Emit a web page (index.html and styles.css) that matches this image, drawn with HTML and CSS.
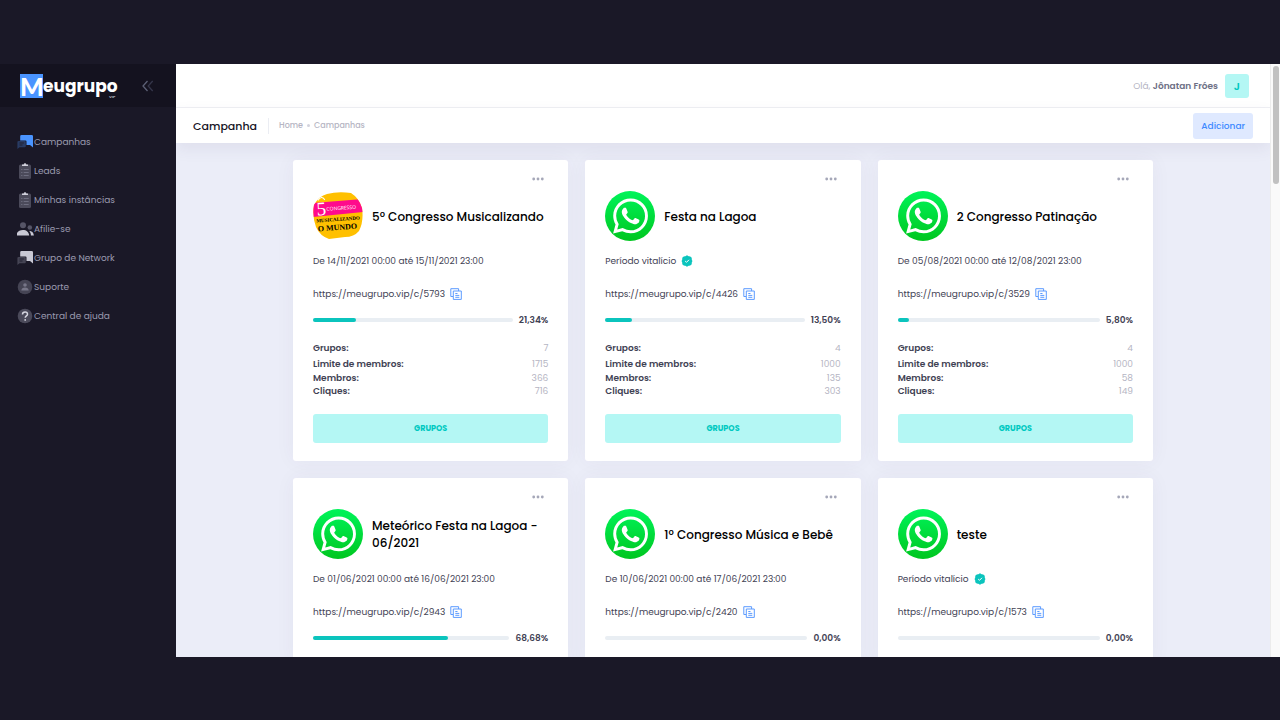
FILE: index.html
```html
<!DOCTYPE html>
<html lang="pt-BR">
<head>
    <meta charset="UTF-8">
    <meta name="viewport" content="width=device-width, initial-scale=1.0">
    <title>Meugrupo - Campanhas</title>
    <link rel="stylesheet" href="styles.css">
</head>
<body>
    <!-- icons -->
    <svg class="sprite" aria-hidden="true">
        <linearGradient id="green" x1="0" y1="0" x2="0" y2="1">
            <stop offset="0" stop-color="#00f45a"/>
            <stop offset="1" stop-color="#00c61f"/>
        </linearGradient>
        <symbol id="whatsapp" viewBox="0 0 50 50">
            <circle cx="25" cy="25" r="25" fill="url(#green)"/>
            <path transform="translate(8 7.500) scale(1.460)" fill="#fff" d="M17.472 14.382c-.297-.149-1.758-.867-2.03-.967-.273-.099-.471-.148-.67.15-.197.297-.767.966-.94 1.164-.173.199-.347.223-.644.075-.297-.15-1.255-.463-2.39-1.475-.883-.788-1.48-1.761-1.653-2.059-.173-.297-.018-.458.13-.606.134-.133.298-.347.446-.52.149-.174.198-.298.298-.497.099-.198.05-.371-.025-.52-.075-.149-.669-1.612-.916-2.207-.242-.579-.487-.5-.669-.51-.173-.008-.371-.01-.57-.01-.198 0-.52.074-.792.372-.272.297-1.04 1.016-1.04 2.479 0 1.462 1.065 2.875 1.213 3.074.149.198 2.096 3.2 5.077 4.487.709.306 1.262.489 1.694.625.712.227 1.36.195 1.871.118.571-.085 1.758-.719 2.006-1.413.248-.694.248-1.289.173-1.413-.074-.124-.272-.198-.57-.347m-5.421 7.403h-.004a9.87 9.87 0 01-5.031-1.378l-.361-.214-3.741.982.998-3.648-.235-.374a9.86 9.86 0 01-1.51-5.26c.001-5.45 4.436-9.884 9.888-9.884 2.64 0 5.122 1.03 6.988 2.898a9.825 9.825 0 012.893 6.994c-.003 5.45-4.437 9.884-9.885 9.884m8.413-18.297A11.815 11.815 0 0012.05 0C5.495 0 .16 5.335.157 11.892c0 2.096.547 4.142 1.588 5.945L.057 24l6.305-1.654a11.882 11.882 0 005.683 1.448h.005c6.554 0 11.89-5.335 11.893-11.893a11.821 11.821 0 00-3.48-8.413z"/>
        </symbol>
        <symbol id="dots" viewBox="0 0 12 4">
            <circle cx="1.700" cy="2" r="1.400"/><circle cx="6" cy="2" r="1.400"/><circle cx="10.300" cy="2" r="1.400"/>
        </symbol>
        <symbol id="copy" viewBox="0 0 12 12">
            <path d="M3 8.500H.8V.7h7.800V3M3.300 3h8v8.400h-8zM5.300 5.500h2.200M5.300 7.400h4M5.300 9.300h4" fill="none" stroke="#5c9bff" stroke-width="1"/>
        </symbol>
        <symbol id="verified" viewBox="0 0 12 12">
            <path d="M6 .1Q7 1.500 8.300 1.300 10.900 1.500 10.800 3.400 10.500 5 11.500 6 10.500 7 10.800 8.600 10.900 10.500 8.300 10.700 7 10.500 6 11.900 5 10.500 3.700 10.700 1.100 10.500 1.200 8.600 1.500 7 .5 6 1.500 5 1.200 3.400 1.100 1.500 3.700 1.300 5 1.500 6 .1z" fill="#0bc4bd"/>
            <path d="M4.200 6.100l1.300 1.200L8 4.800" fill="none" stroke="#fff" stroke-width="1"/>
        </symbol>
        <symbol id="chat" viewBox="0 0 17 16">
            <path fill="var(--bubble)" d="M4.500 1h10.200q1.300 0 1.300 1.300V13.500l-3-2.500H9.500V7.500q0-1-1-1H3.200V2.300Q3.200 1 4.500 1z"/>
            <path fill="var(--small)" d="M1.500 7h6.300q1 0 1 1v4.300q0 1-1 1H2.500L.4 15V8q0-1 1.100-1z"/>
            <path stroke="#222030" d="M2.500 9h4.300M2.500 11h3" fill="none"/>
        </symbol>
        <symbol id="clipboard" viewBox="0 0 17 16">
            <rect x="2" y="1.500" width="12" height="14.500" rx="1.500" fill="#4b4a5a"/>
            <path d="M5 3V1.500h1.700a1.300 1.300 0 012.600 0H11V3z" fill="#cfcfda"/>
            <path d="M4.200 6.500h1.200M6.700 6.500h5M4.200 9.500h1.200M6.700 9.500h5M4.200 12.500h1.200M6.700 12.500h5" stroke="#77778a" stroke-width=".8"/>
        </symbol>
        <symbol id="users" viewBox="0 0 17 16">
            <circle cx="6" cy="4.300" r="3" fill="#565567"/>
            <circle cx="12.800" cy="6.500" r="2.300" fill="#565567"/>
            <path d="M-.7 14.500C-.4 11 2.400 9 5.900 9s6 2 6.300 5.500zM12 9.800c2.900.2 4.500 1.800 4.900 4.700h-3c0-1.900-.5-3.400-1.900-4.700z" fill="#c9c9d5"/>
        </symbol>
        <symbol id="support" viewBox="0 0 17 16">
            <circle cx="8" cy="8" r="7.300" fill="#454454"/>
            <circle cx="8" cy="6" r="1.800" fill="#777688"/>
            <path d="M4.300 11.500q.3-3 3.700-3t3.700 3z" fill="#777688"/>
        </symbol>
        <symbol id="help" viewBox="0 0 17 16">
            <circle cx="8" cy="8" r="7.300" fill="#4b4a5a"/>
            <path d="M5.500 6.400C5.500 4.800 6.500 4 8.100 4s2.400 1 2.400 2.200c0 1.600-2.300 1.700-2.300 3.500" fill="none" stroke="#d5d5df" stroke-width="1.500"/>
            <circle cx="8.200" cy="11.900" r=".9" fill="#d5d5df"/>
        </symbol>
    </svg>

    <div class="app">
        <aside class="sidebar">
            <div class="brand">
                <a class="logo" href="#"><span class="logo-m">M</span><span class="logo-text">eugrupo<small class="logo-vip">VIP</small></span></a>
                <button class="collapse" type="button" aria-label="Recolher menu">
                    <svg width="12" height="12" viewBox="0 0 12 12" fill="none" stroke-width="1.300"><path d="M5.500 1L1 6l4.500 5" stroke="#5d6176"/><path d="M10.700 1L6.200 6l4.500 5" stroke="#35364a"/></svg>
                </button>
            </div>
            <nav class="menu">
                <a class="active" href="#"><svg class="menu-icon"><use href="#chat"/></svg>Campanhas</a>
                <a href="#"><svg class="menu-icon"><use href="#clipboard"/></svg>Leads</a>
                <a href="#"><svg class="menu-icon"><use href="#clipboard"/></svg>Minhas instâncias</a>
                <a href="#"><svg class="menu-icon"><use href="#users"/></svg>Afilie-se</a>
                <a href="#"><svg class="menu-icon"><use href="#chat"/></svg>Grupo de Network</a>
                <a href="#"><svg class="menu-icon"><use href="#support"/></svg>Suporte</a>
                <a href="#"><svg class="menu-icon"><use href="#help"/></svg>Central de ajuda</a>
            </nav>
        </aside>

        <div class="main">
            <header class="topbar">
                <span class="hello">Olá, <b>Jônatan Fróes</b></span>
                <span class="initial">J</span>
            </header>
            <div class="subheader">
                <h1>Campanha</h1>
                <div class="breadcrumb">
                    <a href="#">Home</a>
                    <i></i>
                    <a href="#">Campanhas</a>
                </div>
                <button class="add" type="button">Adicionar</button>
            </div>

            <main class="content">
                <div class="cards">
                    <section class="card">
                        <button class="more" type="button" aria-label="Opções"><svg><use href="#dots"/></svg></button>
                        <div class="card-head">
                            <svg class="avatar" viewBox="0 0 50 50">
                                <clipPath id="shape"><path d="M14 3Q25 0 38 2Q46 7 49 17Q51 30 46 40Q41 46 32 46L16 48Q7 45 3 36Q-1 25 1 14Q6 5 14 3z"/></clipPath>
                                <g clip-path="url(#shape)">
                                    <rect width="50" height="50" fill="#ffc000"/>
                                    <path d="M0 12L50 8V21L0 26z" fill="#ff0a8c"/>
                                    <g transform="rotate(-4 25 25)">
                                        <path d="M6 8q4-5 7 0" fill="none" stroke="#fff" stroke-width="1"/>
                                        <text class="art-number" x="4" y="23">5</text>
                                        <text class="art-small" x="14" y="19">CONGRESSO</text>
                                        <text class="art-mid" x="3" y="30">MUSICALIZANDO</text>
                                        <text class="art-big" x="4" y="39">O MUNDO</text>
                                    </g>
                                </g>
                            </svg>
                            <h2>5º Congresso Musicalizando</h2>
                        </div>
                        <p class="period">De 14/11/2021 00:00 até 15/11/2021 23:00</p>
                        <p class="link">https://meugrupo.vip/c/5793 <button type="button" aria-label="Copiar"><svg><use href="#copy"/></svg></button></p>
                        <div class="progress"><div class="track"><div class="bar" style="width: 21.34%"></div></div><b>21,34%</b></div>
                        <dl class="stats">
                            <div><dt>Grupos:</dt><dd>7</dd></div>
                            <div><dt>Limite de membros:</dt><dd>1715</dd></div>
                            <div class="tight"><dt>Membros:</dt><dd>366</dd></div>
                            <div class="tight"><dt>Cliques:</dt><dd>716</dd></div>
                        </dl>
                        <button class="groups" type="button">GRUPOS</button>
                    </section>

                    <section class="card">
                        <button class="more" type="button" aria-label="Opções"><svg><use href="#dots"/></svg></button>
                        <div class="card-head">
                            <svg class="avatar"><use href="#whatsapp"/></svg>
                            <h2>Festa na Lagoa</h2>
                        </div>
                        <p class="period">Período vitalício <svg><use href="#verified"/></svg></p>
                        <p class="link">https://meugrupo.vip/c/4426 <button type="button" aria-label="Copiar"><svg><use href="#copy"/></svg></button></p>
                        <div class="progress"><div class="track"><div class="bar" style="width: 13.5%"></div></div><b>13,50%</b></div>
                        <dl class="stats">
                            <div><dt>Grupos:</dt><dd>4</dd></div>
                            <div><dt>Limite de membros:</dt><dd>1000</dd></div>
                            <div class="tight"><dt>Membros:</dt><dd>135</dd></div>
                            <div class="tight"><dt>Cliques:</dt><dd>303</dd></div>
                        </dl>
                        <button class="groups" type="button">GRUPOS</button>
                    </section>

                    <section class="card">
                        <button class="more" type="button" aria-label="Opções"><svg><use href="#dots"/></svg></button>
                        <div class="card-head">
                            <svg class="avatar"><use href="#whatsapp"/></svg>
                            <h2>2 Congresso Patinação</h2>
                        </div>
                        <p class="period">De 05/08/2021 00:00 até 12/08/2021 23:00</p>
                        <p class="link">https://meugrupo.vip/c/3529 <button type="button" aria-label="Copiar"><svg><use href="#copy"/></svg></button></p>
                        <div class="progress"><div class="track"><div class="bar" style="width: 5.8%"></div></div><b>5,80%</b></div>
                        <dl class="stats">
                            <div><dt>Grupos:</dt><dd>4</dd></div>
                            <div><dt>Limite de membros:</dt><dd>1000</dd></div>
                            <div class="tight"><dt>Membros:</dt><dd>58</dd></div>
                            <div class="tight"><dt>Cliques:</dt><dd>149</dd></div>
                        </dl>
                        <button class="groups" type="button">GRUPOS</button>
                    </section>

                    <section class="card">
                        <button class="more" type="button" aria-label="Opções"><svg><use href="#dots"/></svg></button>
                        <div class="card-head">
                            <svg class="avatar"><use href="#whatsapp"/></svg>
                            <h2>Meteórico Festa na Lagoa - 06/2021</h2>
                        </div>
                        <p class="period">De 01/06/2021 00:00 até 16/06/2021 23:00</p>
                        <p class="link">https://meugrupo.vip/c/2943 <button type="button" aria-label="Copiar"><svg><use href="#copy"/></svg></button></p>
                        <div class="progress"><div class="track"><div class="bar" style="width: 68.68%"></div></div><b>68,68%</b></div>
                    </section>

                    <section class="card">
                        <button class="more" type="button" aria-label="Opções"><svg><use href="#dots"/></svg></button>
                        <div class="card-head">
                            <svg class="avatar"><use href="#whatsapp"/></svg>
                            <h2>1º Congresso Música e Bebê</h2>
                        </div>
                        <p class="period">De 10/06/2021 00:00 até 17/06/2021 23:00</p>
                        <p class="link">https://meugrupo.vip/c/2420 <button type="button" aria-label="Copiar"><svg><use href="#copy"/></svg></button></p>
                        <div class="progress"><div class="track"></div><b>0,00%</b></div>
                    </section>

                    <section class="card">
                        <button class="more" type="button" aria-label="Opções"><svg><use href="#dots"/></svg></button>
                        <div class="card-head">
                            <svg class="avatar"><use href="#whatsapp"/></svg>
                            <h2>teste</h2>
                        </div>
                        <p class="period">Período vitalício <svg><use href="#verified"/></svg></p>
                        <p class="link">https://meugrupo.vip/c/1573 <button type="button" aria-label="Copiar"><svg><use href="#copy"/></svg></button></p>
                        <div class="progress"><div class="track"></div><b>0,00%</b></div>
                    </section>
                </div>
            </main>
        </div>
        <div class="scrollbar"><div class="thumb"></div></div>
    </div>
</body>
</html>
```

FILE: styles.css
```css
* {
    box-sizing: border-box;
}

body {
    margin: 0;
    padding: 64px 0 63px;
    height: 100vh;
    overflow: hidden;
    background: #1a1827;
    color: #3f4254;
    font-family: Poppins, Inter, "Liberation Sans", sans-serif;
    font-size: 9px;
    line-height: 16px;
}

h1, h2, p, dl, dd {
    margin: 0;
}

a {
    color: inherit;
    text-decoration: none;
}

button {
    padding: 0;
    border: 0;
    background: none;
    font: inherit;
    color: inherit;
    cursor: pointer;
}

svg {
    display: block;
    flex: none;
}

.sprite {
    position: absolute;
    width: 0;
    height: 0;
}

.app {
    display: flex;
    height: 100%;
    overflow: hidden;
}

/* sidebar */
.sidebar {
    width: 176px;
    flex: none;
    background: #1a1827;
}

.brand {
    display: flex;
    align-items: center;
    justify-content: space-between;
    height: 43px;
    padding: 0 22px 0 20px;
    background: #14121f;
}

.logo {
    display: flex;
    align-items: center;
    color: #fff;
    font-weight: 700;
}

.logo-m {
    width: 23px;
    background: #4a94ff;
    font-family: Lato, sans-serif;
    font-weight: 900;
    font-size: 25px;
    line-height: 24px;
    text-align: center;
}

.logo-text {
    position: relative;
    font-size: 17px;
    line-height: 24px;
}

.logo-vip {
    position: absolute;
    right: 2px;
    bottom: -1px;
    font-size: 4px;
    line-height: 4px;
    color: #a9a9b5;
}

.menu {
    display: flex;
    flex-direction: column;
    padding: 20px 0 0 17px;
    --bubble: #c9c9d5;
    --small: #454454;
}

.menu a {
    display: flex;
    align-items: center;
    height: 29px;
    color: #9a9bb0;
}

.menu .active {
    --bubble: #4a94ff;
    --small: #293b63;
}

.menu-icon {
    width: 17px;
    height: 16px;
}

/* header */
.main {
    display: flex;
    flex: 1;
    flex-direction: column;
    min-width: 0;
    overflow: hidden;
    background: #ebedf8;
}

.topbar {
    display: flex;
    flex: none;
    align-items: center;
    justify-content: flex-end;
    gap: 7px;
    height: 44px;
    padding: 0 21px;
    background: #fff;
    border-bottom: 1px solid #eff0f4;
}

.hello {
    color: #b5b5c3;
}

.hello b {
    color: #6d7085;
    font-weight: 600;
}

.initial {
    width: 24px;
    height: 24px;
    border-radius: 3px;
    background: #b4f7f4;
    color: #00c9c1;
    font-size: 11px;
    font-weight: 600;
    line-height: 24px;
    text-align: center;
}

.subheader {
    display: flex;
    flex: none;
    align-items: center;
    height: 35px;
    padding: 0 17px;
    background: #fff;
    box-shadow: 0 6px 16px rgba(82, 63, 105, 0.08);
}

.subheader h1 {
    padding-right: 11px;
    color: #15131f;
    font-size: 11px;
    font-weight: 500;
}

.breadcrumb {
    display: flex;
    flex: 1;
    align-items: center;
    gap: 4px;
    padding-left: 10px;
    border-left: 1px solid #ebedf3;
    color: #b5b5c3;
    font-size: 8px;
    font-weight: 500;
}

.breadcrumb i {
    width: 3px;
    height: 3px;
    border-radius: 50%;
    background: #d3d3dd;
}

.add {
    height: 26px;
    padding: 0 8px;
    border-radius: 3px;
    background: #dfe9ff;
    color: #4089ff;
    font-weight: 500;
}

/* cards */
.content {
    flex: 1;
    min-height: 0;
    padding: 17px 16px;
    overflow: hidden;
}

.cards {
    display: grid;
    grid-template-columns: repeat(3, 1fr);
    gap: 17px;
    max-width: 860px;
    margin: 0 auto;
}

.card {
    display: flex;
    flex-direction: column;
    padding: 12px 20px 18px;
    border-radius: 3px;
    background: #fff;
    box-shadow: 0 0 20px rgba(82, 63, 105, 0.05);
}

.more {
    align-self: flex-end;
    height: 14px;
    margin: 0 4px 5px 0;
    color: #a5a7b8;
}

.more svg {
    width: 12px;
    height: 4px;
    fill: currentColor;
}

.card-head {
    display: flex;
    align-items: center;
    gap: 9px;
}

.avatar {
    width: 50px;
    height: 50px;
}

.card-head h2 {
    color: #000;
    font-size: 12px;
    font-weight: 500;
    line-height: 17px;
}

.art-number, .art-small, .art-mid, .art-big {
    font-family: "Liberation Serif", serif;
}

.art-number {
    fill: #fff;
    font-size: 19px;
}

.art-small {
    fill: #fff;
    font-family: "Open Sans", sans-serif;
    font-size: 5px;
}

.art-mid {
    font-size: 5px;
    font-weight: 700;
}

.art-big {
    font-size: 8px;
    font-weight: 700;
}

.period, .link {
    display: flex;
    align-items: center;
    gap: 5px;
    height: 16px;
}

.period {
    margin-top: 12px;
}

.link {
    margin-top: 17px;
}

.period svg, .link svg {
    width: 12px;
    height: 12px;
}

.progress {
    display: flex;
    align-items: center;
    gap: 6px;
    margin-top: 10px;
}

.progress b {
    font-weight: 600;
}

.track {
    flex: 1;
    height: 4px;
    border-radius: 2px;
    background: #e9eef3;
}

.bar {
    height: 100%;
    border-radius: 2px;
    background: #0bc4bd;
}

.stats {
    margin-top: 12px;
}

.stats div {
    display: flex;
    justify-content: space-between;
}

.stats .tight {
    line-height: 13px;
}

.stats dt {
    font-weight: 600;
}

.stats dd {
    color: #b5b5c3;
}

.groups {
    height: 29px;
    margin-top: 16px;
    border-radius: 3px;
    background: #b4f7f4;
    color: #00c9c1;
    font-size: 8px;
    font-weight: 700;
}

/* scrollbar */
.scrollbar {
    width: 10px;
    flex: none;
    padding: 2px;
    background: #fafafa;
    border-left: 1px solid #ececec;
}

.thumb {
    width: 6px;
    height: 20%;
    border-radius: 3px;
    background: #c1c1c1;
}
```
